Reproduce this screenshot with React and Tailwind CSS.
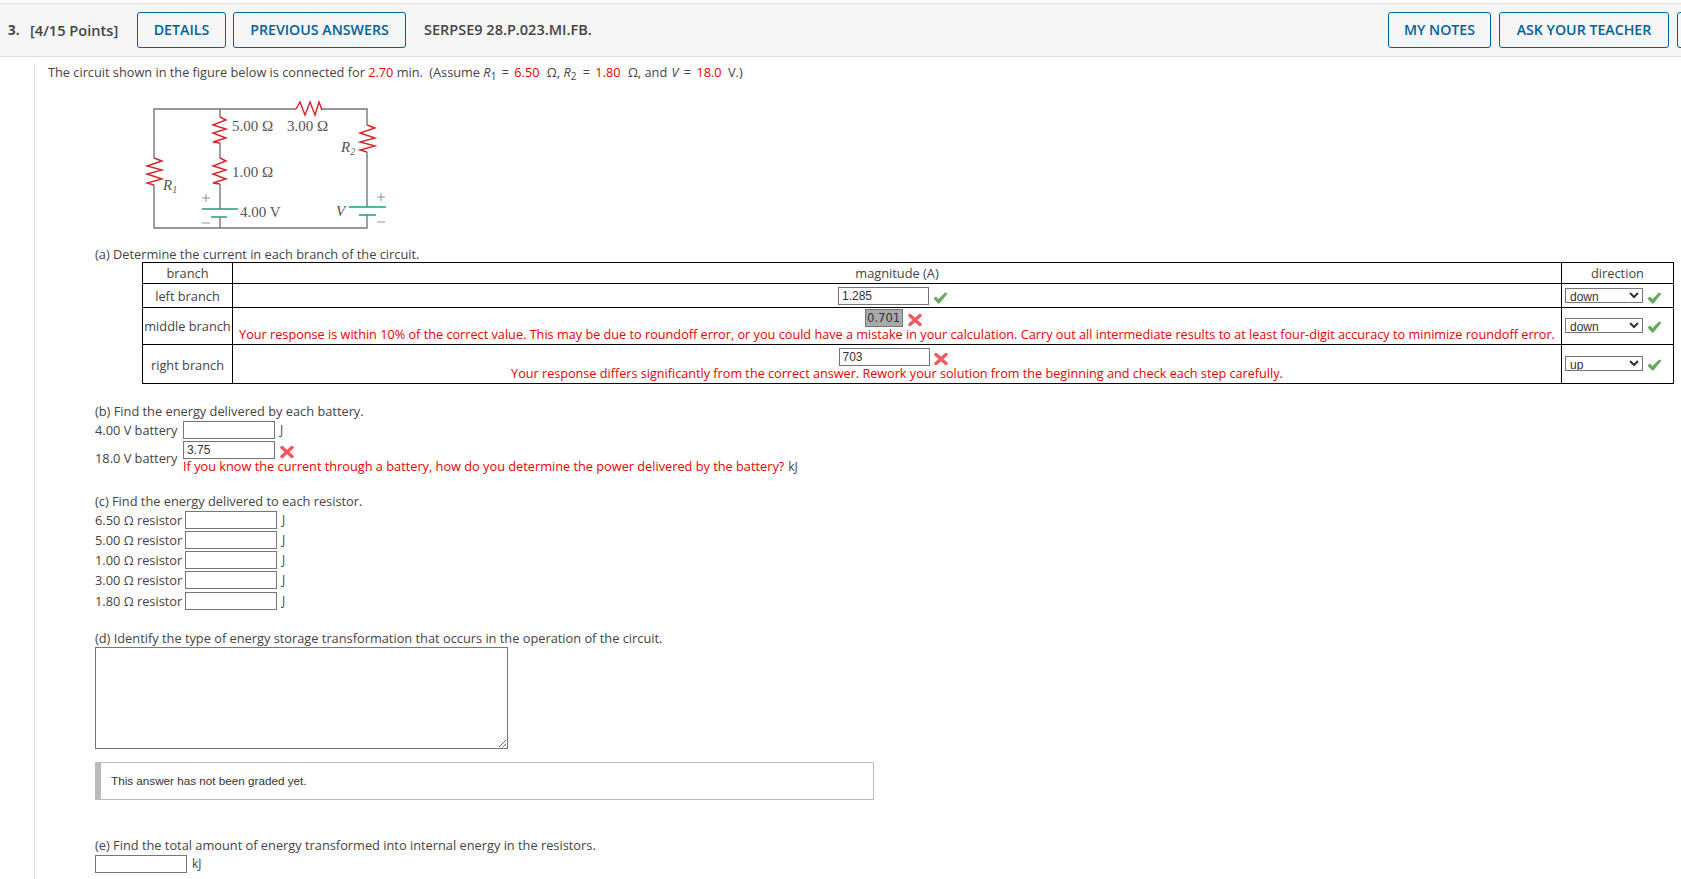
import React from "react";

const font = "font-['Open_Sans',sans-serif]";

const Check = () => (
  <svg width="15" height="12" viewBox="0 0 15 12" className="mt-[4px] inline-block shrink-0">
    <path d="M0.5 6.5 L3 4.5 L5.5 7 L12 0.5 L14.5 1.5 L6.5 11.5 L5 11.5 Z" fill="#66a95f" />
  </svg>
);

const Cross = () => (
  <svg width="14" height="12" viewBox="0 0 14 12" className="mt-[4px] inline-block shrink-0">
    <path d="M2 1.5 L12 10.5 M12 1.5 L2 10.5" stroke="#f0595f" strokeWidth="3.4" strokeLinecap="round" />
  </svg>
);

const Box = ({ w, value = "", gray }) => (
  <input
    readOnly
    value={value}
    className={`h-[18px] ${w} border border-[#767676] leading-none text-[#333] ${gray ? "bg-[#aaaaaa] px-[1px] font-['DejaVu_Sans',sans-serif] text-[11.6px]" : "bg-white px-[3px] font-['Liberation_Sans',sans-serif] text-[12px]"}`}
  />
);

const Dir = ({ value }) => (
  <div className="flex items-center gap-[4px]">
    <select
      defaultValue={value}
      className="h-[15px] w-[78px] border border-[#767676] bg-white p-0 font-['Liberation_Sans',sans-serif] text-[12px] leading-none text-[#333]"
    >
      <option>down</option>
      <option>up</option>
    </select>
    <Check />
  </div>
);

const Btn = ({ children, className = "" }) => (
  <div className={`flex h-[36px] shrink-0 items-center justify-center rounded-[3px] border border-[#00629b] text-[14.2px] font-semibold text-[#00629b] ${className}`}>
    {children}
  </div>
);

const Sub = ({ children }) => <sub className="text-[10px]">{children}</sub>;
const Red = ({ children }) => <span className="text-[#f00000]">{children}</span>;
const Eq = () => <span className="mx-[2px]">=</span>;

const Resistor = ({ d }) => <path d={d} fill="none" stroke="#d8232a" strokeWidth="1.4" />;

const Circuit = () => (
  <svg width="250" height="135" viewBox="0 0 250 135" className="block">
    <g fill="none" stroke="#777" strokeWidth="1.4">
      <path d="M180 10 H225 V26 M225 53 V108 M225 116 V129 H12 V86 M12 59 V10 H154" />
      <path d="M78 10 V18 M78 44 V59 M78 85 V110 M78 118 V129" />
    </g>
    <Resistor d="M154 10 L158 3 L163 16 L168 3 L173 16 L177 3 L180 11" />
    <Resistor d="M78 18 L84 21 L71 26 L84 30 L71 34 L84 39 L71 43 L78 44" />
    <Resistor d="M78 59 L84 62 L71 67 L84 71 L71 75 L84 80 L71 84 L78 85" />
    <Resistor d="M12 59 L20 62 L5 67 L20 71 L5 75 L20 80 L5 84 L12 86" />
    <Resistor d="M225 26 L233 29 L218 34 L233 39 L218 43 L233 47 L218 51 L225 53" />
    <g stroke="#1f9e73" strokeWidth="1.7">
      <path d="M60 110 H96 M69 118 H85" />
      <path d="M207 108 H244 M217 116 H234" />
    </g>
    <g stroke="#777" strokeWidth="0.8">
      <path d="M60 99 H68 M64 95 V103 M60 124 H68" />
      <path d="M235 98 H243 M239 94 V102 M235 123 H243" />
    </g>
    <g fill="#555" fontSize="15" fontFamily="'Liberation Serif', serif">
      <text x="90" y="32">5.00 Ω</text>
      <text x="145" y="32">3.00 Ω</text>
      <text x="90" y="78">1.00 Ω</text>
      <text x="98" y="118">4.00 V</text>
      <text x="199" y="53" fontStyle="italic">R<tspan fontSize="10" dy="3">2</tspan></text>
      <text x="21" y="91" fontStyle="italic">R<tspan fontSize="10" dy="3">1</tspan></text>
      <text x="194" y="117" fontStyle="italic">V</text>
    </g>
  </svg>
);

const Row = ({ label, mt = "mt-[2px]", labelW = "w-[90px]", w = "w-[92px]" }) => (
  <div className={`flex h-[18px] items-center ${mt}`}>
    <span className={`${labelW} whitespace-nowrap`}>{label}</span>
    <Box w={w} />
    <span className="ml-[5px] text-[12px]">J</span>
  </div>
);

export default function App() {
  return (
    <div className={`h-[879px] overflow-hidden bg-white pt-[3px] text-[12.8px] leading-[18px] text-[#444] ${font}`}>
      <div className="flex h-[54px] items-center overflow-hidden border-y border-[#dedede] bg-[#f6f6f6] pl-[8px]">
        <span className="w-[22px] text-[13.4px] font-bold">3.</span>
        <span className="w-[107px] text-[14.6px] font-semibold">[4/15 Points]</span>
        <Btn className="w-[89px]">DETAILS</Btn>
        <Btn className="ml-[7px] w-[173px]">PREVIOUS ANSWERS</Btn>
        <span className="ml-[18px] flex-1 text-[14.5px] font-semibold">SERPSE9 28.P.023.MI.FB.</span>
        <Btn className="w-[103px]">MY NOTES</Btn>
        <Btn className="ml-[8px] w-[170px]">ASK YOUR TEACHER</Btn>
        <Btn className="-mr-[40px] ml-[8px] w-[44px]" />
      </div>

      <div className="ml-[34px] h-[820px] border-l border-[#dedede] pl-[13px]">
        <p className="mt-[6px] text-[12.75px]">
          The circuit shown in the figure below is connected for <Red>2.70</Red> min. <span className="ml-[3px]">(Assume</span> <i>R</i>
          <Sub>1</Sub> <Eq /> <Red>6.50</Red> <span className="ml-[4px]">Ω</span>, <i>R</i>
          <Sub>2</Sub> <span className="ml-[1px]"><Eq /></span> <Red>1.80</Red> <span className="ml-[4px]">Ω</span>, and <span className="ml-[1px]"><i>V</i></span> <Eq /> <Red>18.0</Red> <span className="ml-[3px]">V.)</span>
        </p>

        <div className="ml-[94px] mt-[18px]">
          <Circuit />
        </div>

        <div className="ml-[47px] mt-[11px]">
          <p>(a) Determine the current in each branch of the circuit.</p>
          <table className="ml-[47px] mt-[-1px] w-[1532px] table-fixed border-collapse border border-black text-center">
            <colgroup>
              <col className="w-[90px]" />
              <col />
              <col className="w-[112px]" />
            </colgroup>
            <tbody>
              <tr className="h-[21px]">
                <td className="border border-black">branch</td>
                <td className="border border-black">magnitude (A)</td>
                <td className="border border-black">direction</td>
              </tr>
              <tr className="h-[24px]">
                <td className="border border-black">left branch</td>
                <td className="border border-black">
                  <div className="flex items-center justify-center gap-[4px] pr-[8px]">
                    <Box w="w-[91px]" value="1.285" />
                    <Check />
                  </div>
                </td>
                <td className="border border-black px-[3px]">
                  <Dir value="down" />
                </td>
              </tr>
              <tr className="h-[37px]">
                <td className="whitespace-nowrap border border-black px-[1px]">middle branch</td>
                <td className="border border-black">
                  <div className="flex items-center justify-center gap-[5px] pr-[7px]">
                    <Box w="w-[38px]" value="0.701" gray />
                    <Cross />
                  </div>
                  <div className="-mt-[2px] whitespace-nowrap text-[12.7px] text-[#f00000]">
                    Your response is within 10% of the correct value. This may be due to roundoff error, or you could have a mistake in your calculation. Carry out all intermediate results to at least four-digit accuracy to minimize roundoff error.
                  </div>
                </td>
                <td className="border border-black px-[3px] pb-[2px]">
                  <Dir value="down" />
                </td>
              </tr>
              <tr className="h-[39px]">
                <td className="border border-black pt-[2px]">right branch</td>
                <td className="border border-black pt-[2px]">
                  <div className="flex items-center justify-center gap-[4px] pr-[8px]">
                    <Box w="w-[91px]" value="703" />
                    <Cross />
                  </div>
                  <div className="-mt-[2px] text-[12.65px] text-[#f00000]">
                    Your response differs significantly from the correct answer. Rework your solution from the beginning and check each step carefully.
                  </div>
                </td>
                <td className="border border-black px-[3px] pb-[2px]">
                  <Dir value="up" />
                </td>
              </tr>
            </tbody>
          </table>

          <p className="mt-[18px]">(b) Find the energy delivered by each battery.</p>
          <Row label="4.00 V battery" labelW="w-[88px]" mt="mt-[1px]" />
          <div className="mt-[2px] flex items-center">
            <span className="-mt-[2px] w-[88px] whitespace-nowrap">18.0 V battery</span>
            <div>
              <div className="flex h-[18px] items-center">
                <Box w="w-[92px]" value="3.75" />
                <span className="ml-[5px] flex">
                  <Cross />
                </span>
              </div>
              <div className="-mt-[2px]">
                <span className="text-[12.75px]">
                  <Red>If you know the current through a battery, how do you determine the power delivered by the battery?</Red>
                </span>
                <span className="ml-[4px] text-[12px]">kJ</span>
              </div>
            </div>
          </div>

          <p className="mt-[16px]">(c) Find the energy delivered to each resistor.</p>
          <Row label="6.50 Ω resistor" mt="mt-[1px]" />
          <Row label="5.00 Ω resistor" />
          <Row label="1.00 Ω resistor" />
          <Row label="3.00 Ω resistor" />
          <Row label="1.80 Ω resistor" mt="mt-[3px]" />

          <p className="mt-[19px]">(d) Identify the type of energy storage transformation that occurs in the operation of the circuit.</p>
          <textarea readOnly className="block h-[102px] w-[413px] border border-[#767676] bg-white" />
          <div className="mt-[13px] flex h-[38px] w-[779px] items-center border border-l-[6px] border-[#bbbbbb] pl-[10px] font-['Liberation_Sans',sans-serif] text-[11.7px] text-[#333]">
            This answer has not been graded yet.
          </div>

          <p className="mt-[36px]">(e) Find the total amount of energy transformed into internal energy in the resistors.</p>
          <div className="mt-[1px] flex items-center">
            <Box w="w-[92px]" />
            <span className="ml-[5px] text-[12px]">kJ</span>
          </div>
        </div>
      </div>
    </div>
  );
}
